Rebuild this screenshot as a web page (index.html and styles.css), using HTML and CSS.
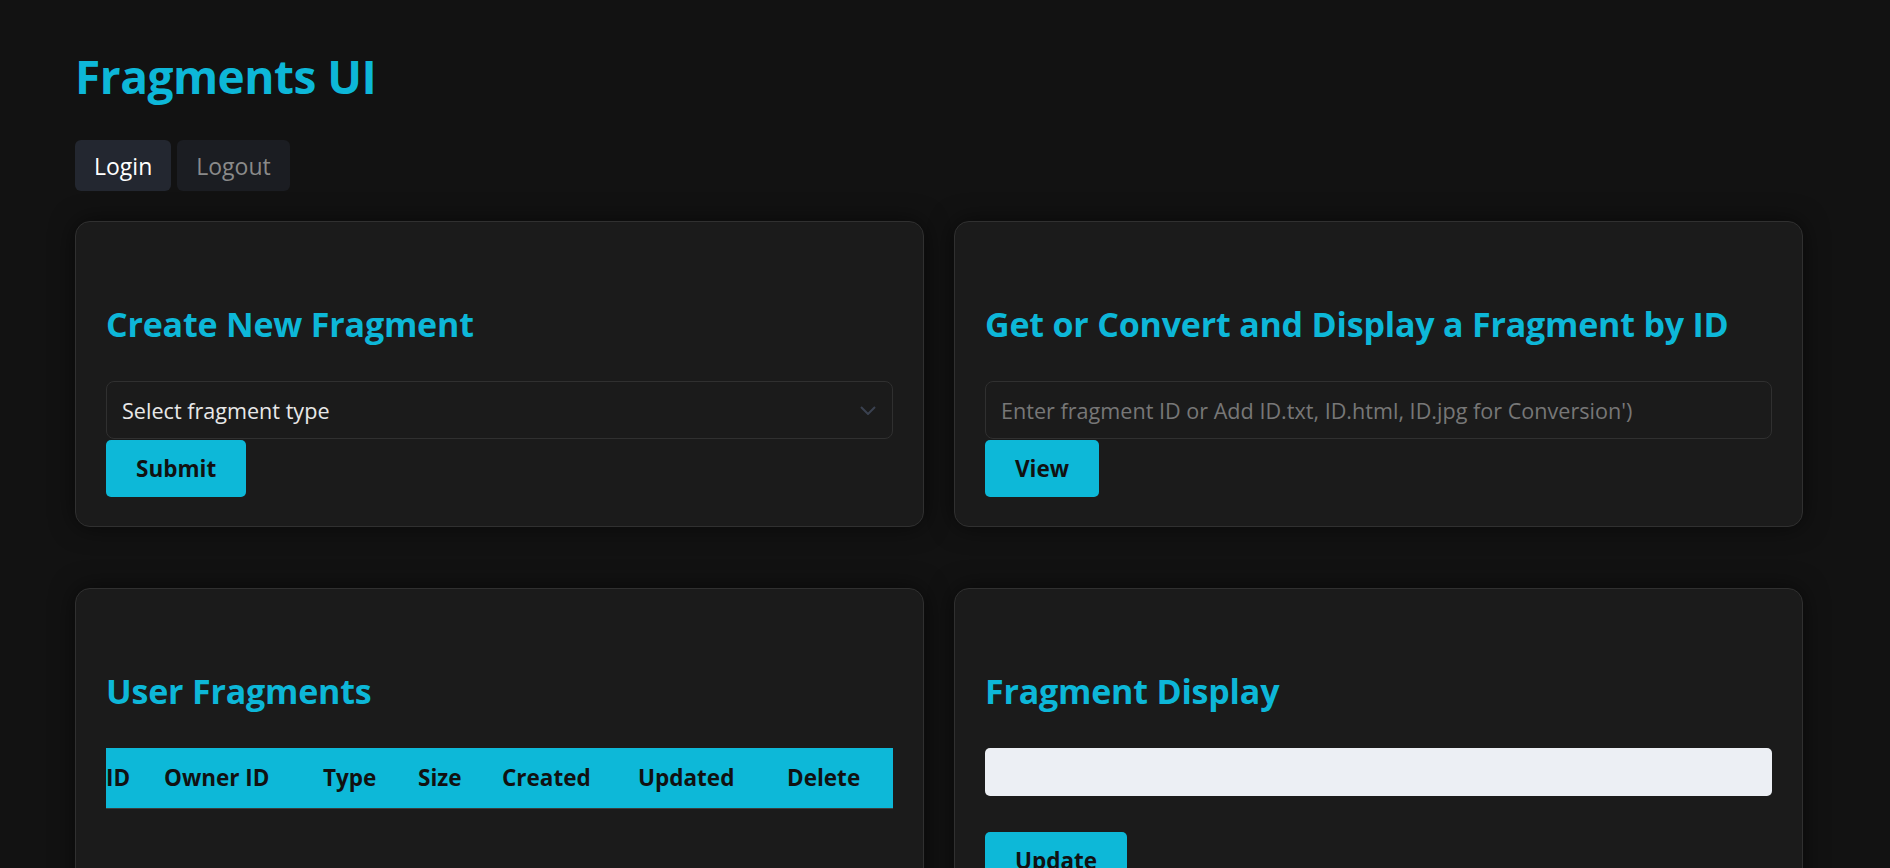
FILE: index.html
```html
<!DOCTYPE html>
<html lang="en">
<head>
<meta charset="utf-8">
<title>Fragments UI</title>
<link rel="stylesheet" href="styles.css">
</head>
<body>
<main class="page">
  <h1 class="title">Fragments UI</h1>
  <nav class="auth">
    <button class="auth-btn auth-btn--active" type="button">Login</button>
    <button class="auth-btn auth-btn--muted" type="button">Logout</button>
  </nav>
  <section class="grid">
    <div class="card">
      <h2 class="card-title">Create New Fragment</h2>
      <form class="form">
        <div class="select-wrap">
          <select class="field select">
            <option>Select fragment type</option>
          </select>
          <svg class="chevron" width="16" height="9" viewBox="0 0 16 9" aria-hidden="true"><path d="M1 1l7 7 7-7" fill="none" stroke="#3a4150" stroke-width="2"/></svg>
        </div>
        <button class="btn" type="button">Submit</button>
      </form>
    </div>
    <div class="card">
      <h2 class="card-title">Get or Convert and Display a Fragment by ID</h2>
      <form class="form">
        <input class="field" type="text" placeholder="Enter fragment ID or Add ID.txt, ID.html, ID.jpg for Conversion')">
        <button class="btn" type="button">View</button>
      </form>
    </div>
    <div class="card card--tall">
      <h2 class="card-title">User Fragments</h2>
      <table class="frag-table">
        <colgroup>
          <col class="c-id"><col class="c-owner"><col class="c-type"><col class="c-size"><col class="c-created"><col class="c-updated"><col class="c-delete">
        </colgroup>
        <thead>
          <tr><th>ID</th><th>Owner ID</th><th>Type</th><th>Size</th><th>Created</th><th>Updated</th><th>Delete</th></tr>
        </thead>
        <tbody></tbody>
      </table>
    </div>
    <div class="card card--tall">
      <h2 class="card-title">Fragment Display</h2>
      <div class="display-box"></div>
      <button class="btn btn--update" type="button">Update</button>
    </div>
  </section>
</main>
</body>
</html>
```

FILE: styles.css
```css
* { box-sizing: border-box; }
html, body { margin: 0; padding: 0; }
body {
  background: #121212;
  color: #e6e6e6;
  font-family: "Open Sans", "Noto Sans", "DejaVu Sans", sans-serif;
  font-size: 24px;
  overflow: hidden;
  height: 868px;
}
.page {
  width: 1728px;
  margin-left: 75px;
  padding-top: 47px;
}
.title {
  margin: 0;
  font-size: 46px;
  line-height: 58px;
  font-weight: 700;
  color: #0db7d8;
  letter-spacing: -0.5px;
}
.auth {
  display: flex;
  gap: 6px;
  margin-top: 35px;
}
.auth-btn {
  height: 51px;
  padding: 0 19px;
  border: none;
  border-radius: 6px;
  font-family: inherit;
  font-size: 23px;
}
.auth-btn--active { background: #232730; color: #ffffff; }
.auth-btn--muted { background: #1b1d22; color: #8a8a8a; }
.grid {
  display: grid;
  grid-template-columns: 1fr 1fr;
  column-gap: 30px;
  row-gap: 61px;
  margin-top: 30px;
}
.card {
  background: #1b1b1b;
  border: 1px solid #303030;
  border-radius: 15px;
  padding: 0 30px 29px 30px;
  box-shadow: 0 0 24px rgba(0, 0, 0, 0.55);
}
.card--tall { min-height: 320px; }
.card-title {
  margin: 78px 0 33px 0;
  font-size: 34px;
  line-height: 48px;
  font-weight: 700;
  color: #0db7d8;
  letter-spacing: -0.2px;
}
.form { display: flex; flex-direction: column; align-items: flex-start; gap: 1px; }
.select-wrap { position: relative; width: 100%; }
.field {
  display: block;
  width: 100%;
  height: 58px;
  padding: 0 15px;
  background: #1b1b1b;
  border: 1px solid #303030;
  border-radius: 8px;
  color: #e8e8e8;
  font-family: inherit;
  font-size: 21.6px;
  outline: none;
}
.field::placeholder { color: #777777; }
.select { appearance: none; -webkit-appearance: none; }
.chevron { position: absolute; right: 17px; top: 25px; pointer-events: none; }
.btn {
  height: 57px;
  padding: 0 30px;
  border: none;
  border-radius: 5px;
  background: #0db8d8;
  color: #111111;
  font-family: inherit;
  font-size: 22.5px;
  font-weight: 700;
}
.frag-table {
  width: 100%;
  border-collapse: collapse;
  table-layout: fixed;
}
.frag-table th {
  height: 60px;
  padding: 0;
  text-align: left;
  background: #0db8d8;
  color: #111111;
  font-size: 22.5px;
  font-weight: 700;
  border-bottom: 1px solid #3c3c3c;
  white-space: nowrap;
}
.c-id { width: 58px; }
.c-owner { width: 159px; }
.c-type { width: 95px; }
.c-size { width: 84px; }
.c-created { width: 136px; }
.c-updated { width: 149px; }
.c-delete { width: 106px; }
.display-box {
  height: 48px;
  background: #eceff4;
  border-radius: 5px;
}
.btn--update { margin-top: 36px; }
```
